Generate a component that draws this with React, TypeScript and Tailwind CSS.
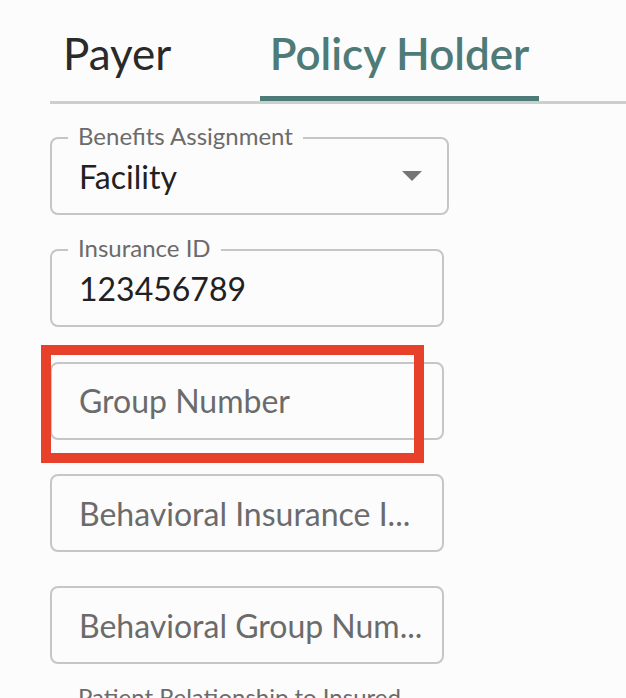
import React from "react";

function Field({
  label,
  value,
  placeholder,
  wide,
  select,
  children,
}: {
  label?: string;
  value?: string;
  placeholder?: string;
  wide?: boolean;
  select?: boolean;
  children?: React.ReactNode;
}) {
  return (
    <div
      className={`relative h-[78px] shrink-0 rounded-[8px] border-2 border-[#c6c6c6] ${
        wide ? "w-[399px]" : "w-[394px]"
      }`}
    >
      {label && (
        <span className="absolute left-[16px] top-[-15px] whitespace-nowrap bg-[#fcfcfc] px-[10px] text-[24px] leading-none text-[#6b6b6b]">
          {label}
        </span>
      )}
      <div className="flex h-full items-center pl-[27px] pr-[16px] pt-[2px]">
        {value ? (
          <span className="whitespace-nowrap text-[32px] leading-[1.2] text-[#212121]">{value}</span>
        ) : (
          <span className="whitespace-nowrap text-[32px] leading-[1.2] text-[#6b6b6b]">{placeholder}</span>
        )}
        {select && (
          <svg className="mb-[2px] ml-auto mr-[9px] shrink-0" width="20" height="10" viewBox="0 0 20 10">
            <polygon points="0,0 20,0 10,10" fill="#757575" />
          </svg>
        )}
      </div>
      {children}
    </div>
  );
}

export default function App() {
  return (
    <div className="h-[698px] overflow-hidden bg-[#fcfcfc] font-['Lato',sans-serif]">
      <div className="pl-[50px]">
        <div className="flex h-[101px] items-end">
          <div className="w-[210px] border-b-[5px] border-transparent pb-[21px] pl-[13px] text-[44px] leading-none text-[#2a2a2a]">
            Payer
          </div>
          <div className="w-[279px] border-b-[5px] border-[#4e7a78] pb-[21px] text-center text-[44px] font-semibold leading-none text-[#4e7a78]">
            Policy Holder
          </div>
        </div>
        <div className="h-[3px] bg-[#cbcfce]" />
        <div className="mt-[33px] flex flex-col gap-[34.25px]">
          <Field label="Benefits Assignment" value="Facility" wide select />
          <Field label="Insurance ID" value="123456789" />
          <Field placeholder="Group Number">
            <div className="absolute left-[-11px] top-[-19px] h-[118px] w-[383px] border-[10px] border-[#e8412b]" />
          </Field>
          <Field placeholder="Behavioral Insurance I..." />
          <Field placeholder="Behavioral Group Num..." />
          <Field label="Patient Relationship to Insured" value="Self" wide select />
        </div>
      </div>
    </div>
  );
}
